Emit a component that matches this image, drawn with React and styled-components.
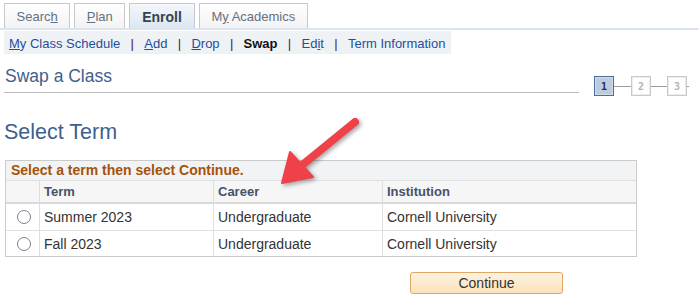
import React from "react";
import styled, { createGlobalStyle } from "styled-components";

const GlobalStyle = createGlobalStyle`
  body {
    margin: 0;
    background: #fff;
    font-family: "Liberation Sans", Arial, sans-serif;
  }
`;

const Page = styled.div`
  position: relative;
  width: 699px;
  height: 305px;
  overflow: hidden;
`;

const TabBar = styled.div`
  display: flex;
  gap: 4px;
  padding: 3px 0 0 4px;
  border-bottom: 2px solid #dbe5f1;
`;

const Tab = styled.div`
  height: 25px;
  box-sizing: border-box;
  padding: 1px ${(p) => (p.$active ? 12 : 11.5)}px 0;
  border: 1px solid #c6cad0;
  border-bottom: none;
  display: flex;
  align-items: center;
  font-size: ${(p) => (p.$active ? 14 : 13)}px;
  font-weight: ${(p) => (p.$active ? "bold" : "normal")};
  color: ${(p) => (p.$active ? "#38414d" : "#65707e")};
  background: ${(p) =>
    p.$active
      ? "linear-gradient(#f4f7fb, #dce6f2)"
      : "linear-gradient(#ffffff, #f2f3f4)"};
`;

const Key = styled.span`
  text-decoration: underline;
`;

const SubNav = styled.div`
  display: flex;
  align-items: center;
  width: fit-content;
  height: 23px;
  box-sizing: border-box;
  margin: 1px 0 0 4px;
  padding: 2px 6px 0 5px;
  background: #eef2f5;
  font-size: 13px;
  line-height: 21px;
`;

const NavLink = styled.span`
  color: ${(p) => (p.$current ? "#111" : "#1f4e9e")};
  font-weight: ${(p) => (p.$current ? "bold" : "normal")};
`;

const Sep = styled.span`
  margin: 0 10.3px;
  color: #4a1848;
`;

const HeaderRow = styled.div`
  display: flex;
  align-items: flex-start;
  margin-top: 12px;
  padding: 0 10px 0 4px;
`;

const PageTitle = styled.div`
  flex: 1;
  padding: 0 0 6px 1px;
  border-bottom: 1px solid #bcbcbc;
  font-size: 17.5px;
  line-height: 20px;
  color: #40608d;
`;

const Steps = styled.div`
  display: flex;
  align-items: center;
  margin: 10px 0 0 15px;
`;

const StepBox = styled.div`
  width: 20px;
  height: 20px;
  box-sizing: border-box;
  display: flex;
  align-items: center;
  justify-content: center;
  border: 1px solid ${(p) => (p.$current ? "#4f6d98" : "#c9c9c9")};
  background: ${(p) => (p.$current ? "#bccbdd" : "#fff")};
  box-shadow: inset 0 0 0 1px ${(p) => (p.$current ? "#d3dcea" : "#ededed")};
  font: bold 10px "DejaVu Sans Mono", monospace;
  color: ${(p) => (p.$current ? "#1f2f55" : "#b4b4b4")};
`;

const StepLink = styled.div`
  width: ${(p) => p.$w}px;
  height: 1px;
  background: #9c9c9c;
`;

const SectionTitle = styled.div`
  margin: 23px 0 0 4px;
  font-size: 21.5px;
  line-height: 26px;
  color: #3f5f8e;
`;

const TableBox = styled.div`
  width: 632px;
  box-sizing: border-box;
  margin: 15px 0 0 5px;
  border: 1px solid #cbcbcb;
`;

const TableCaption = styled.div`
  height: 19px;
  padding-left: 5px;
  line-height: 19px;
  background: #f1f3f4;
  border-bottom: 1px solid #dfe2e4;
  font-size: 14px;
  font-weight: bold;
  color: #a4530c;
`;

const Row = styled.div`
  display: grid;
  grid-template-columns: 33px 174px 169px 1fr;
  height: ${(p) => p.$h}px;
  background: ${(p) => (p.$head ? "#f6f6f6" : "#fff")};
  border-bottom: ${(p) =>
    p.$head ? "2px solid #dadada" : p.$last ? "none" : "1px solid #e0e0e0"};
`;

const Cell = styled.div`
  display: flex;
  align-items: center;
  padding-left: ${(p) => (p.$radio ? 11 : 4)}px;
  border-left: ${(p) => (p.$radio ? "none" : "1px solid #dfdfdf")};
  font-size: ${(p) => (p.$head ? 13 : 14)}px;
  font-weight: ${(p) => (p.$head ? "bold" : "normal")};
  color: ${(p) => (p.$head ? "#465269" : "#333")};
`;

const Radio = styled.span`
  width: 14px;
  height: 14px;
  box-sizing: border-box;
  border-radius: 50%;
  border: 1.5px solid #7f7f8e;
  background: #fff;
`;

const Footer = styled.div`
  padding: 15px 0 0 410px;
`;

const ContinueButton = styled.button`
  width: 153px;
  height: 22px;
  padding: 0;
  border: 1px solid #e2a664;
  border-radius: 3px;
  background: linear-gradient(#fdf3e2, #fbe2b9);
  font-family: "Liberation Sans", Arial, sans-serif;
  font-size: 14px;
  color: #333;
`;

const Arrow = styled.svg`
  position: absolute;
  left: 0;
  top: 0;
  pointer-events: none;
  filter: drop-shadow(2px 2px 2px rgba(0, 0, 0, 0.35));
`;

const terms = [
  { term: "Summer 2023", career: "Undergraduate", inst: "Cornell University", h: 26 },
  { term: "Fall 2023", career: "Undergraduate", inst: "Cornell University", h: 25 },
];

export default function App() {
  return (
    <Page>
      <GlobalStyle />
      <TabBar>
        <Tab>
          <span>Searc<Key>h</Key></span>
        </Tab>
        <Tab>
          <span><Key>P</Key>lan</span>
        </Tab>
        <Tab $active>Enroll</Tab>
        <Tab>
          <span>M<Key>y</Key> Academics</span>
        </Tab>
      </TabBar>

      <SubNav>
        <NavLink><Key>M</Key>y Class Schedule</NavLink>
        <Sep>|</Sep>
        <NavLink><Key>A</Key>dd</NavLink>
        <Sep>|</Sep>
        <NavLink><Key>D</Key>rop</NavLink>
        <Sep>|</Sep>
        <NavLink $current>Swap</NavLink>
        <Sep>|</Sep>
        <NavLink>Ed<Key>i</Key>t</NavLink>
        <Sep>|</Sep>
        <NavLink>Term Information</NavLink>
      </SubNav>

      <HeaderRow>
        <PageTitle>Swap a Class</PageTitle>
        <Steps>
          <StepBox $current>1</StepBox>
          <StepLink $w={17} />
          <StepBox>2</StepBox>
          <StepLink $w={16} />
          <StepBox>3</StepBox>
          <StepLink $w={2} />
        </Steps>
      </HeaderRow>

      <SectionTitle>Select Term</SectionTitle>

      <TableBox>
        <TableCaption>Select a term then select Continue.</TableCaption>
        <Row $head $h={21}>
          <Cell $radio $head />
          <Cell $head>Term</Cell>
          <Cell $head>Career</Cell>
          <Cell $head>Institution</Cell>
        </Row>
        {terms.map((t, i) => (
          <Row key={t.term} $h={t.h} $last={i === terms.length - 1}>
            <Cell $radio>
              <Radio />
            </Cell>
            <Cell>{t.term}</Cell>
            <Cell>{t.career}</Cell>
            <Cell>{t.inst}</Cell>
          </Row>
        ))}
      </TableBox>

      <Footer>
        <ContinueButton>Continue</ContinueButton>
      </Footer>

      <Arrow width="699" height="305" viewBox="0 0 699 305">
        <line x1="355" y1="122" x2="301" y2="166" stroke="#f0414a" strokeWidth="8" strokeLinecap="round" />
        <polygon points="282,183 290,152 313,177" fill="#f0414a" stroke="#f0414a" strokeWidth="2" strokeLinejoin="round" />
      </Arrow>
    </Page>
  );
}
